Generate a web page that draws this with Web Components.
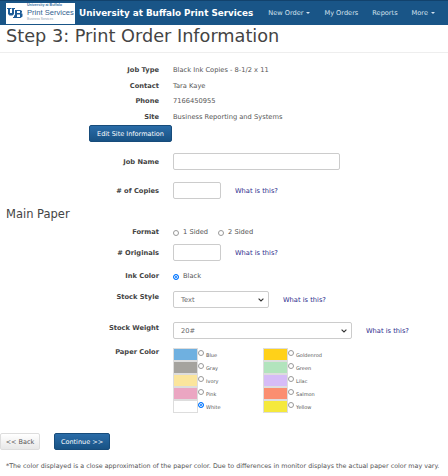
<!DOCTYPE html>
<html>
<head>
<meta charset="utf-8">
<title>Print Order Information</title>
<style>
  html, body { margin: 0; padding: 0; background: #fff; }
  body { font-family: "DejaVu Sans", Verdana, sans-serif; color: #555; overflow: hidden; height: 476px; }
</style>
</head>
<body>
<ub-navbar></ub-navbar>
<ub-page>
  <ub-title slot="title">Step 3: Print Order Information</ub-title>
  <form-row label="Job Type" h="16" top="9"><span>Black Ink Copies - 8-1/2 x 11</span></form-row>
  <form-row label="Contact" h="15"><span>Tara Kaye</span></form-row>
  <form-row label="Phone" h="16"><span>7166450955</span></form-row>
  <form-row label="Site" h="16"><span>Business Reporting and Systems</span></form-row>
  <ub-actions indent="89"><ub-button primary>Edit Site Information</ub-button></ub-actions>
  <form-row label="Job Name" h="17" top="11"><text-box w="167"></text-box></form-row>
  <form-row label="# of Copies" h="17" top="12"><text-box w="48"></text-box><what-link gap="14"></what-link></form-row>
  <ub-heading>Main Paper</ub-heading>
  <form-row label="Format" h="14" top="2"><radio-opt>1 Sided</radio-opt><radio-opt gap="10">2 Sided</radio-opt></form-row>
  <form-row label="# Originals" h="17" top="5"><text-box w="48"></text-box><what-link gap="14"></what-link></form-row>
  <form-row label="Ink Color" h="14" top="8"><radio-opt checked>Black</radio-opt></form-row>
  <form-row label="Stock Style" h="17" top="8" labeltop="-3"><select-box w="96">Text</select-box><what-link gap="14"></what-link></form-row>
  <form-row label="Stock Weight" h="17" top="14" labeltop="-3"><select-box w="179">20#</select-box><what-link gap="14"></what-link></form-row>
  <form-row label="Paper Color" top="9" alignstart>
    <swatch-grid>
      <paper-swatch color="#6fb0e0">Blue</paper-swatch>
      <paper-swatch color="#ffd119">Goldenrod</paper-swatch>
      <paper-swatch color="#a5a39e">Gray</paper-swatch>
      <paper-swatch color="#b2e4bd">Green</paper-swatch>
      <paper-swatch color="#fbe59c">Ivory</paper-swatch>
      <paper-swatch color="#d6bcf7">Lilac</paper-swatch>
      <paper-swatch color="#eba6c2">Pink</paper-swatch>
      <paper-swatch color="#fb8e70">Salmon</paper-swatch>
      <paper-swatch color="#ffffff" checked>White</paper-swatch>
      <paper-swatch color="#f5e93c">Yellow</paper-swatch>
    </swatch-grid>
  </form-row>
  <ub-actions top="20"><ub-button w="40">&lt;&lt; Back</ub-button><ub-button primary gap="14" w="56">Continue &gt;&gt;</ub-button></ub-actions>
  <ub-note>*The color displayed is a close approximation of the paper color. Due to differences in monitor displays the actual paper color may vary.</ub-note>
</ub-page>

<script>
// helper: one shadow root from a template string
class Base extends HTMLElement {
  constructor() {
    super();
    this.attachShadow({ mode: "open" });
  }
  render(html) {
    const t = document.createElement("template");
    t.innerHTML = html;
    this.shadowRoot.appendChild(t.content.cloneNode(true));
  }
  px(name, fallback) {
    return (this.getAttribute(name) || fallback) + "px";
  }
}

class UbNavbar extends Base {
  connectedCallback() {
    this.render(`
    <style>
      :host { display: flex; align-items: center; height: 25px; box-sizing: border-box; background: #195587; border-top: 1px solid #12426c; color: #fff; padding-left: 6px; }
      .logo { width: 69px; height: 21px; background: #fff; display: flex; align-items: center; box-sizing: border-box; padding-left: 1px; flex: none; overflow: hidden; }
      .logo svg { flex: none; width: 16px; height: 10px; }
      .words { margin-left: 4px; font-family: "Liberation Sans", sans-serif; line-height: 1; white-space: nowrap; }
      .u { font-size: 3.6px; font-weight: bold; color: #3a6f9f; height: 5px; }
      .p { font-size: 7.6px; color: #33628f; height: 9px; }
      .b { font-size: 3.2px; color: #8a9db0; height: 4px; }
      .brand { margin-left: 4px; font-size: 8.8px; font-weight: bold; white-space: nowrap; }
      nav { display: flex; margin-left: 15px; font-size: 6.6px; color: #d4e2ee; }
      nav span { white-space: nowrap; }
      nav span + span { margin-left: 14px; }
      .caret { display: inline-block; margin-left: 3px; border: 2px solid transparent; border-top-color: currentColor; border-bottom: 0; vertical-align: 1px; }
    </style>
    <div class="logo">
      <svg viewBox="0 0 16 10" fill="#1d5c98"><path d="M0 0h4v1H3v4h2V1H4.500V0H8v1H7v5L5.500 7.500h-3L1 6V1H0zM8 2h5.500L15 3v1.500L14 5l1.500.8V8.500L13.500 10H6V9h1V7.800L8 6.800V2zm2 1v2h3V3zm0 3.500V9h3V6.500z"/></svg>
      <div class="words"><div class="u">University at Buffalo</div><div class="p">Print Services</div><div class="b">Business Services</div></div>
    </div>
    <span class="brand">University at Buffalo Print Services</span>
    <nav><span>New Order<i class="caret"></i></span><span>My Orders</span><span>Reports</span><span>More<i class="caret"></i></span></nav>`);
  }
}

class UbPage extends Base {
  connectedCallback() {
    this.render(`
    <style>
      :host { display: block; }
    </style>
    <slot name="title"></slot>
    <slot></slot>`);
  }
}

class UbTitle extends Base {
  connectedCallback() {
    this.render(`
    <style>
      :host { display: block; height: 26px; padding-top: 1px; margin-bottom: 6px; padding-left: 6px; border-bottom: 1px solid #eee; font-size: 17.7px; line-height: 20px; color: #444; }
    </style>
    <slot></slot>`);
  }
}

class UbHeading extends Base {
  connectedCallback() {
    this.render(`
    <style>
      :host { display: block; height: 17px; margin-top: 7px; padding-left: 6px; font-size: 11.500px; line-height: 17px; color: #444; }
    </style>
    <slot></slot>`);
  }
}

class FormRow extends Base {
  connectedCallback() {
    const h = this.getAttribute("h");
    this.render(`
    <style>
      :host { display: grid; grid-template-columns: 159px 1fr; column-gap: 14px; align-items: ${this.hasAttribute("alignstart") ? "start" : "center"}; margin-top: ${this.px("top", 0)}; ${h ? `height: ${h}px;` : ""} font-size: 6.7px; color: #555; }
      label { text-align: right; font-weight: bold; color: #444; position: relative; top: ${this.px("labeltop", 0)}; }
      .v { display: flex; align-items: center; white-space: nowrap; }
    </style>
    <label>${this.getAttribute("label")}</label>
    <div class="v"><slot></slot></div>`);
  }
}

class TextBox extends Base {
  connectedCallback() {
    this.render(`
    <style>
      :host { display: block; flex: none; width: ${this.px("w", 48)}; height: 17px; box-sizing: border-box; border: 1px solid #ccc; border-radius: 2px; background: #fff; }
    </style>`);
  }
}

class SelectBox extends Base {
  connectedCallback() {
    this.render(`
    <style>
      :host { display: flex; flex: none; align-items: center; justify-content: space-between; width: ${this.px("w", 96)}; height: 17px; box-sizing: border-box; border: 1px solid #ccc; border-radius: 2px; padding: 0 4px 0 7px; font-size: 6.7px; color: #666; background: #fff; }
      svg { width: 6px; height: 4px; }
    </style>
    <slot></slot>
    <svg viewBox="0 0 6 4"><path d="M.6.6 3 3l2.400-2.400" fill="none" stroke="#333" stroke-width="1.1"/></svg>`);
  }
}

class WhatLink extends Base {
  connectedCallback() {
    this.render(`
    <style>
      :host { display: inline-block; margin-left: ${this.px("gap", 14)}; font-size: 6.7px; color: #2b2b8c; white-space: nowrap; }
    </style>
    What is this?`);
  }
}

class RadioOpt extends Base {
  connectedCallback() {
    const on = this.hasAttribute("checked");
    this.render(`
    <style>
      :host { display: inline-flex; align-items: center; margin-left: ${this.px("gap", 0)}; }
      i { display: block; width: 6px; height: 6px; margin: 1px 4px 0 0; border-radius: 50%; box-sizing: border-box; border: 1px solid ${on ? "#0075ff" : "#999"}; ${on ? "background: #0075ff; box-shadow: inset 0 0 0 1px #fff;" : "background: #fff;"} }
    </style>
    <i></i><slot></slot>`);
  }
}

class SwatchGrid extends Base {
  connectedCallback() {
    this.render(`
    <style>
      :host { display: grid; grid-template-columns: 90px 90px; grid-auto-rows: 13px; }
    </style>
    <slot></slot>`);
  }
}

class PaperSwatch extends Base {
  connectedCallback() {
    const on = this.hasAttribute("checked");
    this.render(`
    <style>
      :host { display: flex; align-items: center; font-size: 5px; color: #555; }
      b { display: block; width: 25px; height: 13px; box-sizing: border-box; border: 1px solid #ddd; background: ${this.getAttribute("color")}; }
      i { display: block; width: 6px; height: 6px; margin: -3px 2px 0 0; border-radius: 50%; box-sizing: border-box; border: 1px solid ${on ? "#0075ff" : "#999"}; ${on ? "background: #0075ff; box-shadow: inset 0 0 0 1px #fff;" : "background: #fff;"} }
    </style>
    <b></b><i></i><slot></slot>`);
  }
}

class UbActions extends Base {
  connectedCallback() {
    this.render(`
    <style>
      :host { display: flex; margin-top: ${this.px("top", 0)}; padding-left: ${this.px("indent", 0)}; }
    </style>
    <slot></slot>`);
  }
}

class UbButton extends Base {
  connectedCallback() {
    const primary = this.hasAttribute("primary");
    const w = this.getAttribute("w");
    this.render(`
    <style>
      :host { display: inline-flex; align-items: center; justify-content: center; height: 17px; box-sizing: border-box; margin-left: ${this.px("gap", 0)}; ${w ? `width: ${w}px;` : "width: 83px;"} border-radius: 2px; font-size: 6.5px; white-space: nowrap;
        ${primary ? "background: linear-gradient(#2a6ca8,#185284); border: 1px solid #174c7b; color: #fff;" : "background: linear-gradient(#fff,#e8e8e8); border: 1px solid #ddd; color: #555;"} }
    </style>
    <slot></slot>`);
  }
}

class UbNote extends Base {
  connectedCallback() {
    this.render(`
    <style>
      :host { display: block; margin-top: 11px; padding-left: 6px; font-size: 6.36px; line-height: 9px; color: #555; white-space: nowrap; }
    </style>
    <slot></slot>`);
  }
}

customElements.define("ub-navbar", UbNavbar);
customElements.define("ub-page", UbPage);
customElements.define("ub-title", UbTitle);
customElements.define("ub-heading", UbHeading);
customElements.define("form-row", FormRow);
customElements.define("text-box", TextBox);
customElements.define("select-box", SelectBox);
customElements.define("what-link", WhatLink);
customElements.define("radio-opt", RadioOpt);
customElements.define("swatch-grid", SwatchGrid);
customElements.define("paper-swatch", PaperSwatch);
customElements.define("ub-actions", UbActions);
customElements.define("ub-button", UbButton);
customElements.define("ub-note", UbNote);
</script>
</body>
</html>
